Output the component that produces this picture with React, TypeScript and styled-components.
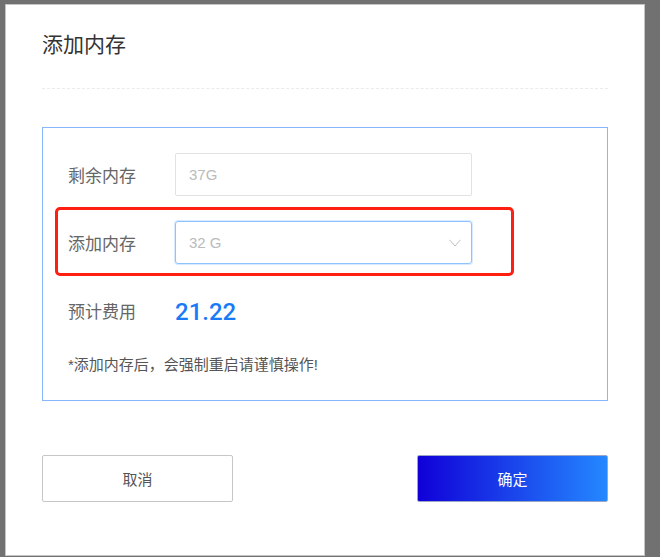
import { memo } from 'react';
import styled, { createGlobalStyle } from 'styled-components';

const FONT = `"Liberation Sans", "Noto Sans CJK SC", sans-serif`;

const GlobalStyle = createGlobalStyle`
  html, body {
    margin: 0;
    padding: 0;
    background: #717171;
    font-family: ${FONT};
  }
`;

const Page = styled.div`
  width: 660px;
  height: 557px;
  padding: 5px 0 0 6px;
  box-sizing: border-box;
  background: #717171;
  overflow: hidden;
`;

const Modal = styled.div`
  width: 638px;
  height: 550px;
  box-sizing: border-box;
  padding: 26px 36px 0;
  background: #ffffff;
  box-shadow: 0 0 0 1px #c4c4c4;
  display: flex;
  flex-direction: column;
`;

const Title = styled.h2`
  margin: 0;
  font-size: 21px;
  line-height: 28px;
  font-weight: normal;
  color: #333333;
`;

const Divider = styled.div`
  margin-top: 29px;
  border-top: 1px dashed #ebebeb;
`;

const Panel = styled.div`
  margin-top: 38px;
  border: 1px solid #86b6fb;
  padding: 25px 0 25px 25px;
  display: flex;
  flex-direction: column;
`;

const Form = styled.div`
  display: grid;
  grid-template-columns: 107px 297px;
  grid-auto-rows: 43px;
  row-gap: 25px;
`;

const Row = styled.div`
  display: contents;
`;

const Label = styled.div`
  display: flex;
  align-items: center;
  font-size: 17px;
  color: #666666;
`;

const Field = styled.div<{ readonly focused?: boolean }>`
  position: relative;
  display: flex;
  align-items: center;
  justify-content: space-between;
  padding: 0 10px 0 13px;
  box-sizing: border-box;
  border: 1px solid ${({ focused }) => (focused ? '#8ec3ff' : '#e2e2e2')};
  border-radius: ${({ focused }) => (focused ? 3 : 2)}px;
  box-shadow: ${({ focused }) => (focused ? '0 0 0 1px rgba(142, 195, 255, 0.35)' : 'none')};
  font-size: 15px;
  color: #bbbbbb;
`;

const Highlight = styled.div`
  position: absolute;
  left: -121px;
  top: -15px;
  width: 459px;
  height: 69px;
  box-sizing: border-box;
  border: 3px solid #ff1e10;
  border-radius: 5px;
  pointer-events: none;
`;

const Price = styled.div`
  display: flex;
  align-items: center;
  font-family: Roboto, ${FONT};
  font-size: 24px;
  font-weight: 500;
  color: #1a7af6;
  padding-top: 3px;
`;

const Note = styled.p`
  margin: 23px 0 0;
  font-size: 15px;
  line-height: 20px;
  color: #555555;
`;

const Footer = styled.div`
  margin-top: 54px;
  display: flex;
  justify-content: space-between;
`;

const Button = styled.button<{ readonly primary?: boolean }>`
  width: 191px;
  height: 47px;
  font-family: ${FONT};
  font-size: 15px;
  cursor: pointer;
  border: 1px solid ${({ primary }) => (primary ? '#9aa7c4' : '#c6c6c6')};
  border-radius: 2px;
  color: ${({ primary }) => (primary ? '#ffffff' : '#555555')};
  background: ${({ primary }) => (primary ? 'linear-gradient(90deg, #1000d8 0%, #2488ff 100%)' : '#ffffff')};
`;

const Chevron = () => (
  <svg width="12" height="8" viewBox="0 0 12 8" fill="none">
    <polyline points="0.5,0.8 6,7 11.5,0.8" stroke="#bdbdbd" strokeWidth="1" />
  </svg>
);

const AddMemoryModal = memo(() => (
  <Modal>
    <Title>添加内存</Title>
    <Divider />
    <Panel>
      <Form>
        <Row>
          <Label>剩余内存</Label>
          <Field>37G</Field>
        </Row>
        <Row>
          <Label>添加内存</Label>
          <Field focused>
            32 G
            <Chevron />
            <Highlight />
          </Field>
        </Row>
        <Row>
          <Label>预计费用</Label>
          <Price>21.22</Price>
        </Row>
      </Form>
      <Note>*添加内存后，会强制重启请谨慎操作!</Note>
    </Panel>
    <Footer>
      <Button>取消</Button>
      <Button primary>确定</Button>
    </Footer>
  </Modal>
));

export default function App() {
  return (
    <>
      <GlobalStyle />
      <Page>
        <AddMemoryModal />
      </Page>
    </>
  );
}
